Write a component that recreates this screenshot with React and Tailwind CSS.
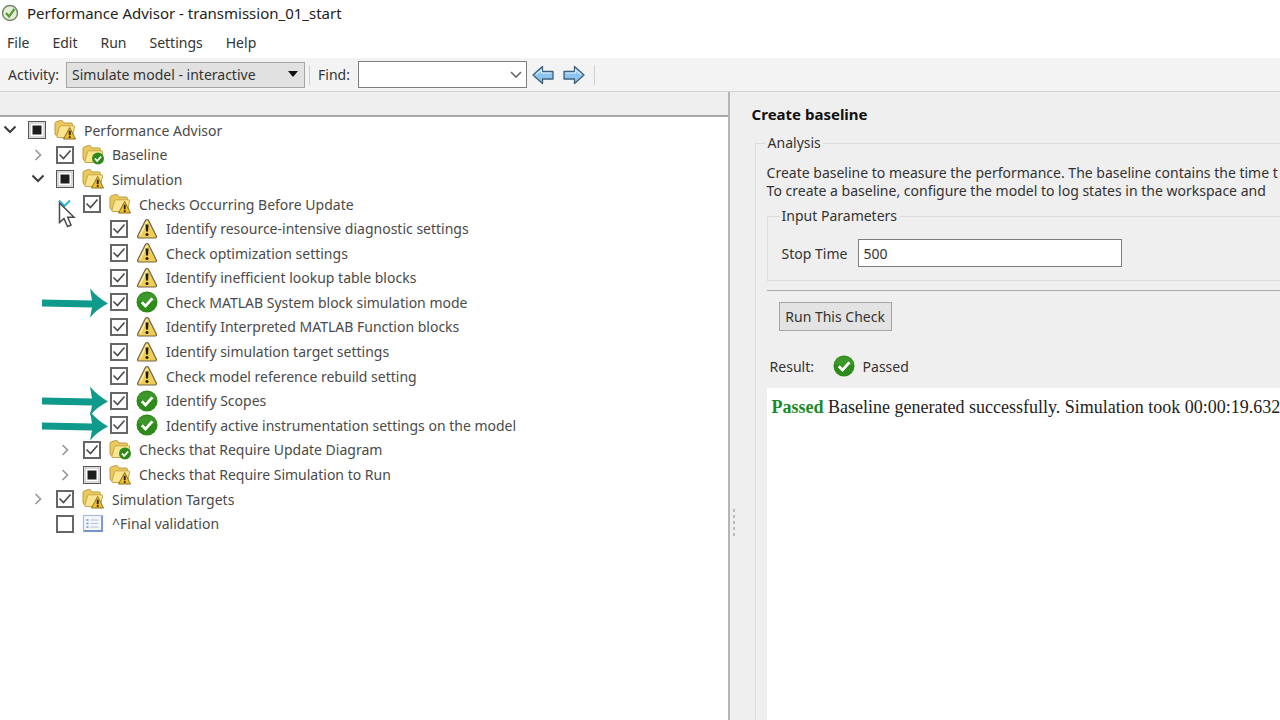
import { useState } from 'react';

const tree = [
  { id: 'root', label: 'Performance Advisor', level: 0, expander: 'open', state: 'partial', icon: 'folderWarning' },
  { id: 'baseline', label: 'Baseline', level: 1, expander: 'closed', state: 'checked', icon: 'folderPassed' },
  { id: 'simulation', label: 'Simulation', level: 1, expander: 'open', state: 'partial', icon: 'folderWarning' },
  { id: 'before', label: 'Checks Occurring Before Update', level: 2, expander: 'hover', state: 'checked', icon: 'folderWarning', cursor: true },
  { id: 'diagnostic', label: 'Identify resource-intensive diagnostic settings', level: 3, state: 'checked', icon: 'warning' },
  { id: 'optimization', label: 'Check optimization settings', level: 3, state: 'checked', icon: 'warning' },
  { id: 'lookup', label: 'Identify inefficient lookup table blocks', level: 3, state: 'checked', icon: 'warning' },
  { id: 'system', label: 'Check MATLAB System block simulation mode', level: 3, state: 'checked', icon: 'passed', arrow: true },
  { id: 'interpreted', label: 'Identify Interpreted MATLAB Function blocks', level: 3, state: 'checked', icon: 'warning' },
  { id: 'target', label: 'Identify simulation target settings', level: 3, state: 'checked', icon: 'warning' },
  { id: 'reference', label: 'Check model reference rebuild setting', level: 3, state: 'checked', icon: 'warning' },
  { id: 'scopes', label: 'Identify Scopes', level: 3, state: 'checked', icon: 'passed', arrow: true },
  { id: 'instrumentation', label: 'Identify active instrumentation settings on the model', level: 3, state: 'checked', icon: 'passed', arrow: true },
  { id: 'updateDiagram', label: 'Checks that Require Update Diagram', level: 2, expander: 'closed', state: 'checked', icon: 'folderPassed' },
  { id: 'runSimulation', label: 'Checks that Require Simulation to Run', level: 2, expander: 'closed', state: 'partial', icon: 'folderWarning' },
  { id: 'targets', label: 'Simulation Targets', level: 1, expander: 'closed', state: 'checked', icon: 'folderWarning' },
  { id: 'final', label: '^Final validation', level: 1, state: 'unchecked', icon: 'report' },
];

const indent = ['pl-[2px]', 'pl-[30px]', 'pl-[57px]', 'pl-[84px]'];

const PassedIcon = () => (
  <svg viewBox="0 0 22 22" className="w-[22px] h-[22px]">
    <circle cx="11" cy="11" r="10.5" fill="#2f8a1c" />
    <path d="M1.500 9A10 10 0 0 1 20.500 9Q11 13 1.500 9Z" fill="#4aa033" opacity=".6" />
    <path d="M5.800 11.200l3.700 3.800 6.900-7.600" fill="none" stroke="#fff" strokeWidth="2.800" />
  </svg>
);

const WarningIcon = () => (
  <svg viewBox="0 0 22 22" className="w-[22px] h-[22px]">
    <path d="M11 1.500Q12 1.500 12.600 2.600L20.300 18Q20.800 20 19.300 20H2.700Q1.200 20 1.700 18L9.400 2.600Q10 1.500 11 1.500Z" fill="#f0cd55" stroke="#6f6547" strokeWidth="1.200" />
    <path d="M11 3.500L4 17.500" stroke="#fdf0a8" strokeWidth="1.500" />
    <path d="M9.500 6.500h3l-.5 7h-2z" fill="#1d1a10" />
    <circle cx="11" cy="16.500" r="1.500" fill="#1d1a10" />
  </svg>
);

const FolderIcon = ({ badge }) => (
  <svg viewBox="0 0 22 22" className="w-[22px] h-[22px]">
    <path d="M1 4.500Q1 3 2.500 2.800L6.500 1.500Q8 1 9 2.500L10 4H17Q18.500 4 18.500 5.500V15L3 17.500L1 15Z" fill="#ecc95a" stroke="#b89a45" />
    <path d="M5.500 8Q5.800 6.800 7 6.800H19.500Q21 6.800 20.600 8L18.500 17Q18 18.500 16.500 18.500H4Q2.500 18.500 2.900 17Z" fill="#fbe591" stroke="#c5a54a" />
    {badge === 'passed' ? (
      <>
        <circle cx="16" cy="14.500" r="6" fill="#2f8a1c" />
        <path d="M12.800 14.500l2.400 2.400 4-4.400" fill="none" stroke="#fff" strokeWidth="1.700" />
      </>
    ) : (
      <>
        <path d="M15.700 8.500L21.500 20H9.500Z" fill="#f0c02c" stroke="#8d6f1e" strokeLinejoin="round" />
        <path d="M15.700 11.800v4.500M15.700 17.300v1.700" stroke="#1d1a10" strokeWidth="1.800" />
      </>
    )}
  </svg>
);

const ReportIcon = () => (
  <svg viewBox="0 0 22 22" className="w-[22px] h-[22px]">
    <rect x="1.500" y="2.500" width="19" height="16" fill="#f3f7fc" stroke="#a9bcdc" strokeWidth="1.200" />
    <path d="M20 3v15.500M2 18h18.500" stroke="#7794c8" strokeWidth="1.800" />
    <path d="M4.500 7h2M4.500 10.500h2M4.500 14h2" stroke="#6f8cc4" strokeWidth="1.400" />
    <path d="M8.500 7h8M8.500 10.500h8M8.500 14h8" stroke="#b4c2da" strokeWidth="1.200" />
  </svg>
);

const NodeIcon = ({ icon }) => {
  if (icon === 'passed') return <PassedIcon />;
  if (icon === 'warning') return <WarningIcon />;
  if (icon === 'report') return <ReportIcon />;
  return <FolderIcon badge={icon === 'folderPassed' ? 'passed' : 'warning'} />;
};

const Expander = ({ type, label }) => {
  if (!type) return <span className="w-[18px] shrink-0" />;
  return (
    <button type="button" aria-label={`Toggle ${label}`} className="w-[18px] h-[18px] shrink-0">
      <svg viewBox="0 0 18 18" className="w-[18px] h-[18px]" fill="none">
        {type === 'closed' && <path d="M5.500 4l5 5-5 5" stroke="#9a9a9a" strokeWidth="1.700" />}
        {type === 'open' && <path d="M2.500 5.500l5.500 5.500L13.500 5.500" stroke="#3c3c3c" strokeWidth="2" />}
        {type === 'hover' && <path d="M2 5.500l5.500 5.500L13 5.500" stroke="#27b4dc" strokeWidth="2" />}
      </svg>
    </button>
  );
};

const CheckBox = ({ id, state, onChange }) => (
  <span className="relative w-[18px] h-[18px] shrink-0">
    <input
      id={id}
      type="checkbox"
      checked={state !== 'unchecked'}
      onChange={onChange}
      className={`block w-[18px] h-[18px] appearance-none bg-white ${state === 'partial' ? 'border border-[#555555]' : 'border-2 border-[#666666]'}`}
    />
    <svg viewBox="0 0 18 18" className="absolute inset-0 w-[18px] h-[18px] pointer-events-none" fill="none">
      {state === 'checked' && <path d="M3.500 8.500l4 4L14.500 4.500" stroke="#4a4a4a" strokeWidth="1.600" />}
      {state === 'partial' && (
        <>
          <rect x="2" y="2" width="14" height="14" stroke="#b5b5b5" />
          <rect x="4.500" y="4.500" width="9" height="9" fill="#1c1c1c" />
        </>
      )}
    </svg>
  </span>
);

const NoteArrow = () => (
  <svg viewBox="0 0 66 30" className="absolute left-[42px] -top-[2px] w-[66px] h-[30px] pointer-events-none">
    <path d="M0 11.500L50 12.500 48 0.500Q55 9 66 15.500 55 21 48 29.500L50 19.500 0 18.500Z" fill="#0f9a8c" />
  </svg>
);

const Cursor = () => (
  <svg viewBox="0 0 18 27" className="absolute left-[58px] top-[9px] w-[18px] h-[27px] pointer-events-none">
    <path d="M1.500 2V21.500L6 17.500L9.500 25.500L13 24L9.700 16.200H16Z" fill="#fff" stroke="#4a4a4a" strokeWidth="1.500" />
  </svg>
);

const FindArrow = ({ flip }) => (
  <svg viewBox="0 0 22 20" className={`w-[22px] h-[20px] ${flip ? '-scale-x-100' : ''}`}>
    <path d="M1 10L10.500 1.500V6.500H21V14H10.500V18.500Z" fill="#8fc4ee" stroke="#3d617c" strokeWidth="1.300" strokeLinejoin="round" />
    <path d="M4 9.500L9.500 5V8H19.500" fill="none" stroke="#d6edfc" strokeWidth="1.200" />
  </svg>
);

const App = () => {
  const [nodes, setNodes] = useState(tree);
  const [find, setFind] = useState('');
  const [stopTime, setStopTime] = useState('500');

  const toggleNode = (id) => {
    setNodes(prev => prev.map(node => (
      node.id === id ? { ...node, state: node.state === 'checked' ? 'unchecked' : 'checked' } : node
    )));
  };

  return (
    <div className="h-screen flex flex-col overflow-hidden bg-[#efefef] text-[#333333] text-[14px] font-['Noto_Sans',sans-serif]">
      {/* Title bar */}
      <header className="h-[26px] shrink-0 bg-white flex items-center gap-2 pl-px">
        <svg viewBox="0 0 18 18" className="w-[18px] h-[18px]">
          <circle cx="9" cy="9" r="7.500" fill="#e4efd5" stroke="#77856a" strokeWidth="1.500" />
          <path d="M5 9l3 3.500L13.500 5" fill="none" stroke="#5b9a35" strokeWidth="2.200" />
        </svg>
        <h1 className="text-[15px] text-[#222222]">Performance Advisor - transmission_01_start</h1>
      </header>

      {/* Menu bar */}
      <nav className="h-[32px] shrink-0 bg-white flex items-center gap-[23px] pl-[7px]">
        <button type="button">File</button>
        <button type="button">Edit</button>
        <button type="button">Run</button>
        <button type="button">Settings</button>
        <button type="button">Help</button>
      </nav>

      {/* Toolbar */}
      <div className="h-[34px] shrink-0 flex items-center bg-[#f3f3f3] border-b border-[#d2d2d2] pl-2">
        <label htmlFor="activity" className="w-[58px]">Activity:</label>
        <div className="relative w-[239px]">
          <select id="activity" className="block w-full h-[26px] appearance-none border border-[#a5a5a5] bg-[#e1e1e1] pl-[5px]">
            <option>Simulate model - interactive</option>
          </select>
          <svg viewBox="0 0 12 7" className="absolute right-[6px] top-[9px] w-3 h-[7px] pointer-events-none">
            <path d="M1 0h10L6 6z" fill="#111" />
          </svg>
        </div>
        <span className="ml-1 mr-2 w-px h-5 bg-[#d0d0d0]" />
        <label htmlFor="find" className="w-[40px]">Find:</label>
        <div className="flex w-[169px] h-[27px] border border-[#7d7d7d] bg-white">
          <input id="find" value={find} onChange={(e) => setFind(e.target.value)} className="min-w-0 flex-1 px-1 outline-none" />
          <button type="button" aria-label="Find history" className="w-4">
            <svg viewBox="0 0 12 8" className="w-3 h-2" fill="none">
              <path d="M1 1l5 5 5-5" stroke="#6a6a6a" strokeWidth="1.600" />
            </svg>
          </button>
        </div>
        <button type="button" aria-label="Find previous" className="ml-[5px]"><FindArrow /></button>
        <button type="button" aria-label="Find next" className="ml-[9px]"><FindArrow flip /></button>
        <span className="ml-[9px] w-px h-5 bg-[#d0d0d0]" />
      </div>

      <div className="flex-1 min-h-0 flex">
        {/* Check tree */}
        <aside className="w-[57%] shrink-0 flex flex-col border-r-2 border-[#b5b5b5]">
          <div className="h-[25px] shrink-0 border-b-2 border-[#a8a8a8]" />
          <div className="flex-1 bg-white pt-px">
            <ul className="h-[418px] grid auto-rows-fr">
              {nodes.map(node => (
                <li key={node.id} className={`relative flex items-center gap-2 ${indent[node.level]}`}>
                  <Expander type={node.expander} label={node.label} />
                  <CheckBox id={node.id} state={node.state} onChange={() => toggleNode(node.id)} />
                  <NodeIcon icon={node.icon} />
                  <label htmlFor={node.id} className="whitespace-nowrap text-[#4a4a4a]">{node.label}</label>
                  {node.arrow && <NoteArrow />}
                  {node.cursor && <Cursor />}
                </li>
              ))}
            </ul>
          </div>
        </aside>

        {/* Splitter grip */}
        <div className="w-2 shrink-0 flex flex-col items-center justify-center gap-[3px] pt-[232px]">
          {[0, 1, 2, 3, 4].map(dot => (
            <span key={dot} className="w-[2px] h-[3px] bg-[#bbbbbb]" />
          ))}
        </div>

        {/* Check details */}
        <main className="flex-1 min-w-0 flex flex-col overflow-hidden whitespace-nowrap pl-[14px] pt-[12px]">
          <h2 className="h-5 leading-5 text-[15px] font-bold text-[#111111]">Create baseline</h2>
          <fieldset className="flex-1 min-w-0 flex flex-col border-l border-t border-[#dcdcdc] ml-[3px] mt-[11px] pl-[11px]">
            <legend className="h-4 leading-4 px-[2px] -ml-px">Analysis</legend>
            <p className="mt-[13px] leading-[18px]">
              Create baseline to measure the performance. The baseline contains the time t
              <br />
              To create a baseline, configure the model to log states in the workspace and
            </p>
            <fieldset className="min-w-0 mt-2 border-l border-y border-[#dcdcdc] pl-[14px] pb-[13px]">
              <legend className="h-4 leading-4 -ml-[2px] px-[2px]">Input Parameters</legend>
              <div className="flex items-center mt-[15px]">
                <label htmlFor="stopTime" className="w-[76px]">Stop Time</label>
                <input
                  id="stopTime"
                  value={stopTime}
                  onChange={(e) => setStopTime(e.target.value)}
                  className="w-[264px] h-[28px] border border-[#7d7d7d] bg-white px-[5px] outline-none"
                />
              </div>
            </fieldset>
            <hr className="mt-[9px] border-t border-[#a8a8a8]" />
            <button type="button" className="self-start mt-[11px] ml-3 w-[113px] h-[29px] border border-[#a5a5a5] bg-[#e3e3e3]">
              Run This Check
            </button>
            <div className="flex items-center mt-6 h-[22px] pl-[3px]">
              <span className="w-[63px]">Result:</span>
              <PassedIcon />
              <span className="ml-2">Passed</span>
            </div>
            <div className="flex-1 mt-[11px] bg-white pl-[5px] pt-[9px] text-[18px] leading-5 text-[#222222] font-['Liberation_Serif',serif]">
              <b className="text-[#1a8a2a]">Passed</b> Baseline generated successfully. Simulation took 00:00:19.632
            </div>
          </fieldset>
        </main>
      </div>
    </div>
  );
};

export default App;
